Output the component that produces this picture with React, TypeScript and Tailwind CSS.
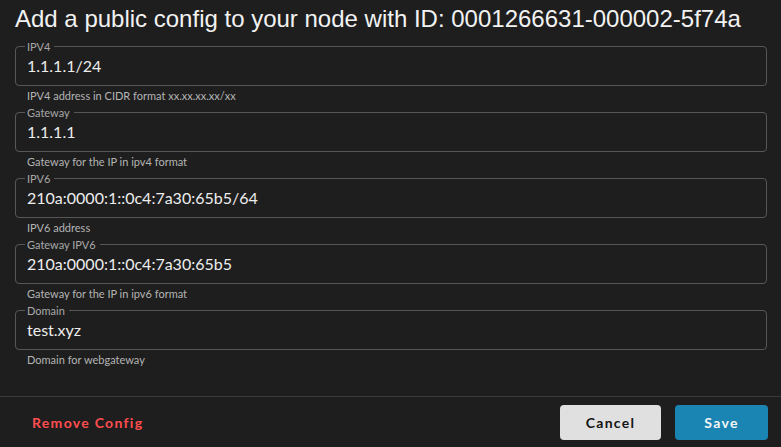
import React from "react";

const FIELDS = [
  { label: "IPV4", value: "1.1.1.1/24", help: "IPV4 address in CIDR format xx.xx.xx.xx/xx" },
  { label: "Gateway", value: "1.1.1.1", help: "Gateway for the IP in ipv4 format" },
  { label: "IPV6", value: "210a:0000:1::0c4:7a30:65b5/64", help: "IPV6 address" },
  { label: "Gateway IPV6", value: "210a:0000:1::0c4:7a30:65b5", help: "Gateway for the IP in ipv6 format" },
  { label: "Domain", value: "test.xyz", help: "Domain for webgateway" },
];

function Field({ label, value, help }: { label: string; value: string; help: string }) {
  return (
    <div className="flex flex-col">
      <fieldset className="m-0 rounded-[4px] border border-[#575757] pl-[9px] pr-[9px] pb-[9px]">
        <legend className="pl-[2px] pr-[4px] text-[11px] leading-[13px] text-[#a8a8a8]">
          {label}
        </legend>
        <div className="mt-[3px] pl-[2px] text-[16px] leading-[20px] text-[#ededed]">{value}</div>
      </fieldset>
      <span className="h-[20px] pl-[12px] text-[11px] leading-[20px] text-[#b4b4b4]">{help}</span>
    </div>
  );
}

export default function App() {
  return (
    <div
      className="flex h-[447px] w-[781px] flex-col overflow-hidden bg-[#1e1e1e]"
      style={{ fontFamily: "Lato, 'Noto Sans', sans-serif" }}
    >
      <h1
        className="mt-[5px] pl-[15px] text-[24px] leading-[28px] text-[#f2f2f2]"
        style={{ fontFamily: "'Liberation Sans', Arial, sans-serif" }}
      >
        Add a public config to your node with ID: 0001266631-000002-5f74a
      </h1>
      <div className="mt-[7px] flex flex-1 flex-col pl-[15px] pr-[14px]">
        {FIELDS.map((f) => (
          <Field key={f.label} {...f} />
        ))}
      </div>
      <div className="flex h-[51px] items-center border-t border-[#3a3a3a]">
        <button className="pl-[32px] text-[14px] font-bold tracking-[1.3px] text-[#ff4d4f]">
          Remove Config
        </button>
        <div className="ml-auto flex gap-[14px] pr-[13px]">
          <button className="h-[35px] w-[101px] rounded-[4px] bg-[#e0e0e0] text-[14px] font-bold tracking-[1.3px] text-[#141414]">
            Cancel
          </button>
          <button className="h-[35px] w-[93px] rounded-[4px] bg-[#1a84b3] text-[14px] font-bold tracking-[1.3px] text-[#f5f5f5]">
            Save
          </button>
        </div>
      </div>
    </div>
  );
}
